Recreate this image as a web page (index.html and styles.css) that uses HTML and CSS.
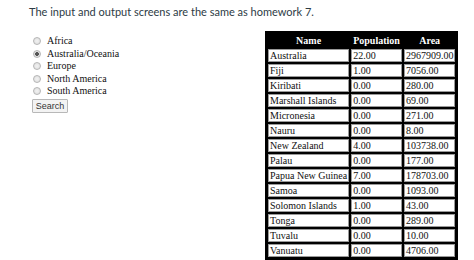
FILE: index.html
```html
<!DOCTYPE html>
<html>
<head>
<meta charset="utf-8">
<link rel="stylesheet" href="styles.css">
</head>
<body>
<div class="page">
  <p class="intro">The input and output screens are the same as homework 7.</p>
  <div class="content">
    <form class="regions">
      <label class="opt"><input type="radio" name="r" class="radio"><span>Africa</span></label>
      <label class="opt"><input type="radio" name="r" class="radio" checked><span>Australia/Oceania</span></label>
      <label class="opt"><input type="radio" name="r" class="radio"><span>Europe</span></label>
      <label class="opt"><input type="radio" name="r" class="radio"><span>North America</span></label>
      <label class="opt"><input type="radio" name="r" class="radio"><span>South America</span></label>
      <button type="button" class="search">Search</button>
    </form>
    <table class="results">
      <thead>
        <tr><th>Name</th><th>Population</th><th>Area</th></tr>
      </thead>
      <tbody>
        <tr><td>Australia</td><td>22.00</td><td>2967909.00</td></tr>
        <tr><td>Fiji</td><td>1.00</td><td>7056.00</td></tr>
        <tr><td>Kiribati</td><td>0.00</td><td>280.00</td></tr>
        <tr><td>Marshall Islands</td><td>0.00</td><td>69.00</td></tr>
        <tr><td>Micronesia</td><td>0.00</td><td>271.00</td></tr>
        <tr><td>Nauru</td><td>0.00</td><td>8.00</td></tr>
        <tr><td>New Zealand</td><td>4.00</td><td>103738.00</td></tr>
        <tr><td>Palau</td><td>0.00</td><td>177.00</td></tr>
        <tr><td>Papua New Guinea</td><td>7.00</td><td>178703.00</td></tr>
        <tr><td>Samoa</td><td>0.00</td><td>1093.00</td></tr>
        <tr><td>Solomon Islands</td><td>1.00</td><td>43.00</td></tr>
        <tr><td>Tonga</td><td>0.00</td><td>289.00</td></tr>
        <tr><td>Tuvalu</td><td>0.00</td><td>10.00</td></tr>
        <tr><td>Vanuatu</td><td>0.00</td><td>4706.00</td></tr>
      </tbody>
    </table>
  </div>
</div>
</body>
</html>
```
FILE: styles.css
```css
html, body {
  margin: 0;
  padding: 0;
  background: #ffffff;
}
.page {
  padding: 5px 0 0 29px;
}
.intro {
  margin: 0;
  font-family: Lato, "Open Sans", sans-serif;
  font-size: 11px;
  line-height: 14px;
  color: #2d3b45;
}
.content {
  display: flex;
  align-items: flex-start;
  margin-top: 12px;
}
.regions {
  display: flex;
  flex-direction: column;
  align-items: flex-start;
  width: 236px;
  margin-top: 4px;
  font-family: "Liberation Serif", serif;
  font-size: 10px;
  color: #111;
}
.opt {
  display: flex;
  align-items: center;
  height: 12.5px;
  line-height: 12.5px;
}
.radio {
  appearance: none;
  -webkit-appearance: none;
  width: 8px;
  height: 8px;
  margin: 0 6px 0 4px;
  border: 1px solid #b5b5b5;
  border-radius: 50%;
  background: radial-gradient(circle, #f2f2f2 0%, #dcdcdc 100%);
  box-sizing: border-box;
  position: relative;
}
.radio:checked {
  background: radial-gradient(circle, #555 0 1.6px, #e6e6e6 2.2px, #d6d6d6 100%);
}
.search {
  margin: 1px 0 0 3px;
  width: 36px;
  height: 14px;
  padding: 0;
  font-family: "Liberation Sans", Arial, sans-serif;
  font-size: 9px;
  color: #333;
  background: #f3f3f3;
  border: 1px solid #b8b8b8;
  border-radius: 1px;
}
.results {
  background: #000;
  border: 1px solid #000;
  border-spacing: 2px;
  font-family: "Liberation Serif", serif;
  font-size: 10px;
  line-height: 11px;
  color: #111;
}
.results th {
  color: #fff;
  font-weight: bold;
  text-align: center;
  padding: 1px 2px;
  background: #000;
}
.results td {
  background: #fff;
  border: 1px solid #9a9a9a;
  padding: 0 1px;
  white-space: nowrap;
}
```
